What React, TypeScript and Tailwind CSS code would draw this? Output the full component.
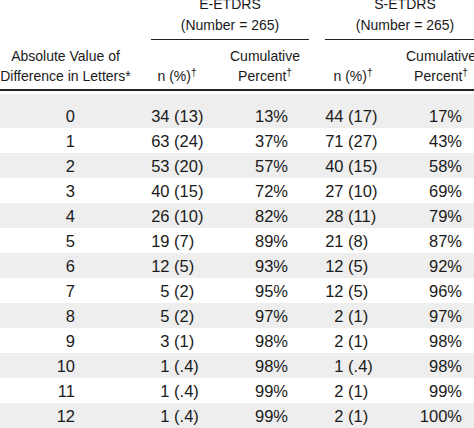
type Row = {
  diff: string;
  eN: [string, string];
  eCum: string;
  sN: [string, string];
  sCum: string;
};

const rows: Row[] = [
  { diff: "0", eN: ["34", "(13)"], eCum: "13%", sN: ["44", "(17)"], sCum: "17%" },
  { diff: "1", eN: ["63", "(24)"], eCum: "37%", sN: ["71", "(27)"], sCum: "43%" },
  { diff: "2", eN: ["53", "(20)"], eCum: "57%", sN: ["40", "(15)"], sCum: "58%" },
  { diff: "3", eN: ["40", "(15)"], eCum: "72%", sN: ["27", "(10)"], sCum: "69%" },
  { diff: "4", eN: ["26", "(10)"], eCum: "82%", sN: ["28", "(11)"], sCum: "79%" },
  { diff: "5", eN: ["19", "(7)"], eCum: "89%", sN: ["21", "(8)"], sCum: "87%" },
  { diff: "6", eN: ["12", "(5)"], eCum: "93%", sN: ["12", "(5)"], sCum: "92%" },
  { diff: "7", eN: ["5", "(2)"], eCum: "95%", sN: ["12", "(5)"], sCum: "96%" },
  { diff: "8", eN: ["5", "(2)"], eCum: "97%", sN: ["2", "(1)"], sCum: "97%" },
  { diff: "9", eN: ["3", "(1)"], eCum: "98%", sN: ["2", "(1)"], sCum: "98%" },
  { diff: "10", eN: ["1", "(.4)"], eCum: "98%", sN: ["1", "(.4)"], sCum: "98%" },
  { diff: "11", eN: ["1", "(.4)"], eCum: "99%", sN: ["2", "(1)"], sCum: "99%" },
  { diff: "12", eN: ["1", "(.4)"], eCum: "99%", sN: ["2", "(1)"], sCum: "100%" },
];

const cols = "grid grid-cols-[133px_88px_88px_88px_88px]";

const Dagger = () => <sup className="text-[10px] top-[-0.55em]">†</sup>;

const NCell = ({ v, pad }: { v: [string, string]; pad: string }) => (
  <div className={`flex whitespace-nowrap ${pad}`}>
    <span className="w-[18.5px] text-right">{v[0]}</span>
    <span>&nbsp;{v[1]}</span>
  </div>
);

const App = () => {
  return (
    <div className="w-[474px] h-[428px] overflow-hidden bg-white text-[#1a1a1a] font-['Liberation_Sans',Arial,sans-serif]">
      <div className="w-[485px]">
        {/* group headers */}
        <div className={`${cols} -mt-[6px] text-[14px] leading-[21px]`}>
          <div />
          <div className="col-span-2 ml-[18px] border-b border-[#222] pb-[3px] text-center">
            <div>E-ETDRS</div>
            <div>(Number = 265)</div>
          </div>
          <div className="col-span-2 ml-[16px] border-b border-[#222] pb-[3px] text-center">
            <div>S-ETDRS</div>
            <div>(Number = 265)</div>
          </div>
        </div>

        {/* column headers */}
        <div className={`${cols} items-end pt-[6px] pb-[3px] border-b-2 border-[#222] text-[14px] leading-[20px]`}>
          <div className="text-center pr-[2px] whitespace-nowrap">
            <div>Absolute Value of</div>
            <div>Difference in Letters*</div>
          </div>
          <div className="text-center whitespace-nowrap">
            n (%)<Dagger />
          </div>
          <div className="text-center">
            <div>Cumulative</div>
            <div>
              Percent<Dagger />
            </div>
          </div>
          <div className="text-center whitespace-nowrap">
            n (%)<Dagger />
          </div>
          <div className="text-center">
            <div>Cumulative</div>
            <div>
              Percent<Dagger />
            </div>
          </div>
        </div>

        {/* body */}
        <div className="mt-[3px] text-[16.5px] leading-[23px]">
          {rows.map((r, i) => (
            <div
              key={r.diff}
              className={`${cols} ${i === 0 ? "h-[34px] pt-[11px]" : "h-[25px] pt-[2px]"} ${
                i % 2 === 0 ? "bg-[#eeeeee]" : "bg-white"
              }`}
            >
              <div className="text-right pr-[58px]">{r.diff}</div>
              <NCell v={r.eN} pad="pl-[18px]" />
              <div className="text-right pr-[21px]">{r.eCum}</div>
              <NCell v={r.sN} pad="pl-[16px]" />
              <div className="text-right pr-[23px]">{r.sCum}</div>
            </div>
          ))}
        </div>
      </div>
    </div>
  );
};

export default App;
